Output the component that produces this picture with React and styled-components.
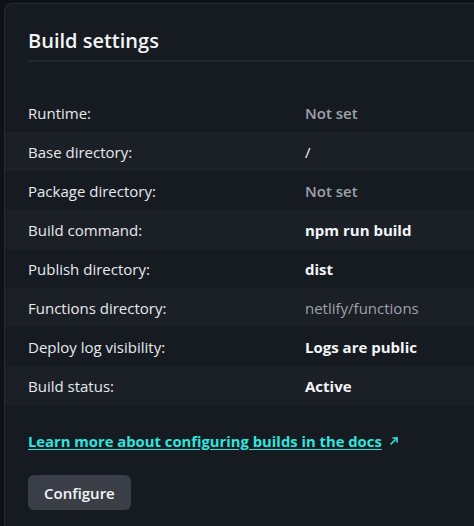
import React from 'react'
import styled, { createGlobalStyle } from 'styled-components'

const Global = createGlobalStyle`
    html, body {
        margin: 0;
        padding: 0;
        background: #0e1117;
        overflow: hidden;
    }
    body {
        font-family: "Open Sans", "Noto Sans", sans-serif;
        color: #e8eaed;
    }
`

const Page = styled.div`
    height: 526px;
    padding: 3px 0 0 4px;
    box-sizing: border-box;
    display: flex;
`

const Card = styled.section`
    flex: 1;
    box-sizing: border-box;
    background: #161a21;
    border: 1px solid #262b33;
    border-right: none;
    border-bottom: none;
    border-radius: 8px 0 0 0;
    padding-top: 23px;
`

const Title = styled.h2`
    margin: 0 0 0 23px;
    padding-bottom: 5px;
    border-bottom: 2px solid #242930;
    font-size: 20px;
    line-height: 28px;
    font-weight: 600;
    color: #f3f4f6;
`

const List = styled.dl`
    margin: 31px 0 0;
`

const Row = styled.div`
    display: grid;
    grid-template-columns: 277px 1fr;
    align-items: center;
    height: 39px;
    padding-left: 23px;
    background: ${p => (p.$striped ? '#1b1f26' : 'transparent')};
`

const Label = styled.dt`
    font-size: 15px;
    color: #e8eaed;
`

const Value = styled.dd`
    margin: 0;
    font-size: 15px;
    font-weight: ${p => (p.$bold ? 700 : p.$muted === 'strong' ? 600 : 400)};
    color: ${p => (p.$muted ? '#9ea3aa' : '#f4f5f7')};
`

const Footer = styled.div`
    padding-left: 23px;
    margin-top: 25px;
`

const DocsLink = styled.a`
    display: inline-flex;
    align-items: center;
    gap: 7px;
    font-size: 14.8px;
    line-height: 20px;
    font-weight: 700;
    color: #32e3dd;
    text-decoration: none;

    span {
        text-decoration: underline;
        text-underline-offset: 2px;
    }
`

const Button = styled.button`
    display: block;
    margin-top: 23px;
    height: 35px;
    padding: 0 16px;
    border: none;
    border-radius: 6px;
    background: #3a3f47;
    color: #f4f5f7;
    font-family: inherit;
    font-size: 15px;
    font-weight: 600;
`

const rows = [
    { label: 'Runtime:', value: 'Not set', muted: 'strong' },
    { label: 'Base directory:', value: '/' },
    { label: 'Package directory:', value: 'Not set', muted: 'strong' },
    { label: 'Build command:', value: 'npm run build', bold: true },
    { label: 'Publish directory:', value: 'dist', bold: true },
    { label: 'Functions directory:', value: 'netlify/functions', muted: 'light' },
    { label: 'Deploy log visibility:', value: 'Logs are public', bold: true },
    { label: 'Build status:', value: 'Active', bold: true },
]

function ExternalArrow() {
    return (
        <svg width="10" height="10" viewBox="0 0 10 10" fill="none" stroke="#32e3dd" strokeWidth="1.6" strokeLinecap="round">
            <path d="M2 8 L8 2" />
            <path d="M4 2 H8 V6" />
        </svg>
    )
}

export default function App() {
    return (
        <>
            <Global />
            <Page>
                <Card>
                    <Title>Build settings</Title>
                    <List>
                        {rows.map((r, i) => (
                            <Row key={r.label} $striped={i % 2 === 1}>
                                <Label>{r.label}</Label>
                                <Value $bold={r.bold} $muted={r.muted}>{r.value}</Value>
                            </Row>
                        ))}
                    </List>
                    <Footer>
                        <DocsLink href="#">
                            <span>Learn more about configuring builds in the docs</span>
                            <ExternalArrow />
                        </DocsLink>
                        <Button>Configure</Button>
                    </Footer>
                </Card>
            </Page>
        </>
    )
}
